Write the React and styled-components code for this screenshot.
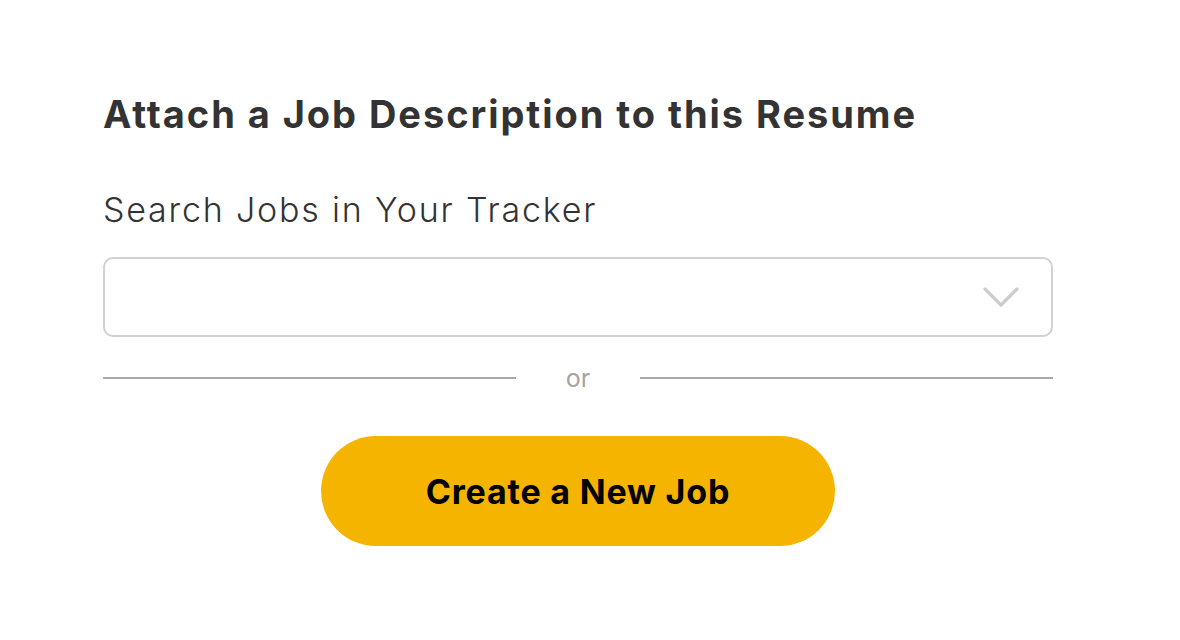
import styled, { createGlobalStyle } from "styled-components";

const GlobalStyle = createGlobalStyle`
  body {
    margin: 0;
    background: #ffffff;
    font-family: Inter, "Noto Sans", sans-serif;
    color: #333333;
  }
`;

const Page = styled.div`
  width: 1180px;
  height: 640px;
  box-sizing: border-box;
  padding: 87px 0 0 103px;
`;

const Panel = styled.div`
  width: 950px;
  display: flex;
  flex-direction: column;
`;

const Title = styled.h2`
  margin: 0;
  font-size: 38px;
  line-height: 54px;
  font-weight: 700;
  color: #333333;
  letter-spacing: 1.95px;
  white-space: nowrap;
`;

const Label = styled.label`
  margin-top: 45px;
  font-size: 34px;
  line-height: 48px;
  font-weight: 300;
  color: #333333;
  letter-spacing: 1.8px;
`;

const SelectBox = styled.div`
  margin-top: 23px;
  height: 80px;
  box-sizing: border-box;
  border: 2px solid #d1d1d1;
  border-radius: 10px;
  display: flex;
  align-items: center;
  justify-content: flex-end;
  padding-right: 32px;
  color: #cccccc;
`;

const Divider = styled.div`
  margin-top: 29px;
  display: grid;
  grid-template-columns: 1fr 124px 1fr;
  align-items: center;
`;

const Rule = styled.span`
  height: 2px;
  background: #a8a8a8;
`;

const Or = styled.span`
  text-align: center;
  font-size: 25px;
  line-height: 24px;
  font-weight: 400;
  color: #a3a3a3;
`;

const Actions = styled.div`
  margin-top: 46px;
  display: flex;
  justify-content: center;
`;

const CreateButton = styled.button`
  width: 514px;
  height: 110px;
  border: none;
  border-radius: 55px;
  background: #f5b400;
  color: #000000;
  font-family: Inter, "Noto Sans", sans-serif;
  font-size: 34px;
  font-weight: 700;
  letter-spacing: 0.8px;
  cursor: pointer;
`;

function Chevron() {
  return (
    <svg width="36" height="22" viewBox="0 0 36 22" fill="none">
      <path
        d="M2 3 L18 19 L34 3"
        stroke="currentColor"
        strokeWidth="3.2"
        strokeLinecap="round"
        strokeLinejoin="round"
      />
    </svg>
  );
}

export default function App() {
  return (
    <>
      <GlobalStyle />
      <Page>
        <Panel>
          <Title>Attach a Job Description to this Resume</Title>
          <Label>Search Jobs in Your Tracker</Label>
          <SelectBox>
            <Chevron />
          </SelectBox>
          <Divider>
            <Rule />
            <Or>or</Or>
            <Rule />
          </Divider>
          <Actions>
            <CreateButton type="button">Create a New Job</CreateButton>
          </Actions>
        </Panel>
      </Page>
    </>
  );
}
